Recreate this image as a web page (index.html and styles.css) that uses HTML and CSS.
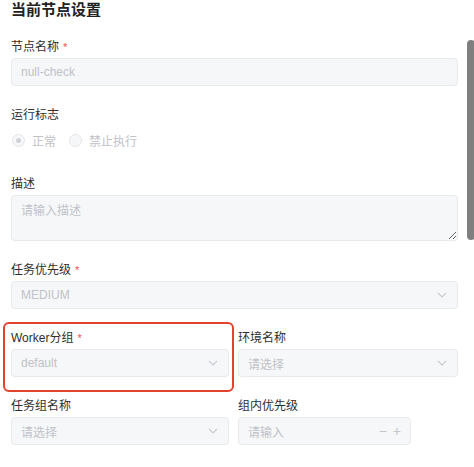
FILE: index.html
```html
<!DOCTYPE html>
<html lang="zh">
<head>
<meta charset="utf-8">
<link rel="stylesheet" href="styles.css">
</head>
<body>
<div class="panel">
  <h1 class="title">当前节点设置</h1>

  <div class="item">
    <div class="label">节点名称<span class="req">*</span></div>
    <div class="input"><span class="ph">null-check</span></div>
  </div>

  <div class="item">
    <div class="label">运行标志</div>
    <div class="radios">
      <span class="radio checked"><span class="dot"></span></span><span class="rtext">正常</span>
      <span class="radio"></span><span class="rtext">禁止执行</span>
    </div>
  </div>

  <div class="item">
    <div class="label">描述</div>
    <textarea class="textarea" placeholder="请输入描述" disabled></textarea>
  </div>

  <div class="item">
    <div class="label">任务优先级<span class="req">*</span></div>
    <div class="input select"><span class="ph">MEDIUM</span>
      <svg class="chev" width="10" height="6" viewBox="0 0 10 6"><path d="M1 1l4 4 4-4" fill="none" stroke="#c8cbd1" stroke-width="1.1"/></svg>
    </div>
  </div>

  <div class="grid">
    <div class="cell highlighted">
      <div class="label">Worker分组<span class="req">*</span></div>
      <div class="input select"><span class="ph">default</span>
        <svg class="chev" width="10" height="6" viewBox="0 0 10 6"><path d="M1 1l4 4 4-4" fill="none" stroke="#c8cbd1" stroke-width="1.1"/></svg>
      </div>
    </div>
    <div class="cell">
      <div class="label">环境名称</div>
      <div class="input select"><span class="ph">请选择</span>
        <svg class="chev" width="10" height="6" viewBox="0 0 10 6"><path d="M1 1l4 4 4-4" fill="none" stroke="#c8cbd1" stroke-width="1.1"/></svg>
      </div>
    </div>
    <div class="cell">
      <div class="label">任务组名称</div>
      <div class="input select"><span class="ph">请选择</span>
        <svg class="chev" width="10" height="6" viewBox="0 0 10 6"><path d="M1 1l4 4 4-4" fill="none" stroke="#c8cbd1" stroke-width="1.1"/></svg>
      </div>
    </div>
    <div class="cell">
      <div class="label">组内优先级</div>
      <div class="input number"><span class="ph">请输入</span>
        <span class="steps"><span class="step">−</span><span class="step">+</span></span>
      </div>
    </div>
  </div>
</div>
<div class="scrollbar"></div>
</body>
</html>
```

FILE: styles.css
```css
html, body {
  margin: 0;
  padding: 0;
  background: #ffffff;
  overflow: hidden;
}
body {
  font-family: "Liberation Sans", "Noto Sans CJK SC", sans-serif;
  color: #2b2b2b;
  font-size: 12px;
  width: 474px;
  height: 467px;
  position: relative;
}
.panel {
  padding-left: 11px;
  width: 447px;
}
.title {
  margin: 0 0 16px 0;
  font-size: 15px;
  line-height: 20px;
  font-weight: 700;
  color: #222;
}
.item {
  margin-bottom: 18px;
}
.label {
  height: 22px;
  line-height: 22px;
  font-size: 12px;
  color: #2f2f2f;
  white-space: nowrap;
}
.req {
  color: #f0504a;
  margin-left: 4px;
  font-size: 11px;
}
.input {
  box-sizing: border-box;
  height: 28px;
  width: 100%;
  background: #f6f7f9;
  border: 1px solid #e9eaed;
  border-radius: 4px;
  padding: 0 9px;
  display: flex;
  align-items: center;
  justify-content: space-between;
}
.ph {
  color: #bfc2c8;
  font-size: 12px;
}
.chev {
  margin-right: 1px;
}
.radios {
  height: 29px;
  display: flex;
  align-items: center;
}
.radio {
  box-sizing: border-box;
  width: 13px;
  height: 13px;
  border-radius: 50%;
  border: 1px solid #e3e5e9;
  background: #f6f7f9;
  display: inline-flex;
  align-items: center;
  justify-content: center;
  margin-left: 1px;
}
.radio .dot {
  width: 5px;
  height: 5px;
  border-radius: 50%;
  background: #cfd2d7;
}
.rtext {
  color: #bfc2c8;
  font-size: 12px;
  margin-left: 7px;
  margin-right: 12px;
}
.textarea {
  display: block;
  box-sizing: border-box;
  width: 447px;
  height: 46px;
  margin: 0;
  background: #f6f7f9;
  border: 1px solid #e9eaed;
  border-radius: 4px;
  padding: 5px 9px;
  font-family: "Liberation Sans", "Noto Sans CJK SC", sans-serif;
  font-size: 12px;
  resize: both;
}
.textarea::placeholder {
  color: #bfc2c8;
}
.grid {
  display: grid;
  grid-template-columns: 218px 220px;
  column-gap: 9px;
  row-gap: 18px;
}
.cell {
  position: relative;
}
.highlighted::after {
  content: "";
  position: absolute;
  left: -8px;
  right: -5px;
  top: -5px;
  bottom: -15px;
  border: 2px solid #e2432d;
  border-radius: 6px;
  pointer-events: none;
}
.number {
  width: 173px;
}
.steps {
  display: flex;
  gap: 6px;
  color: #c3c6cc;
  font-size: 14px;
}
.scrollbar {
  position: absolute;
  left: 467px;
  top: 40px;
  width: 8px;
  height: 200px;
  background: #7f7f7f;
  border-radius: 4px;
}
```
